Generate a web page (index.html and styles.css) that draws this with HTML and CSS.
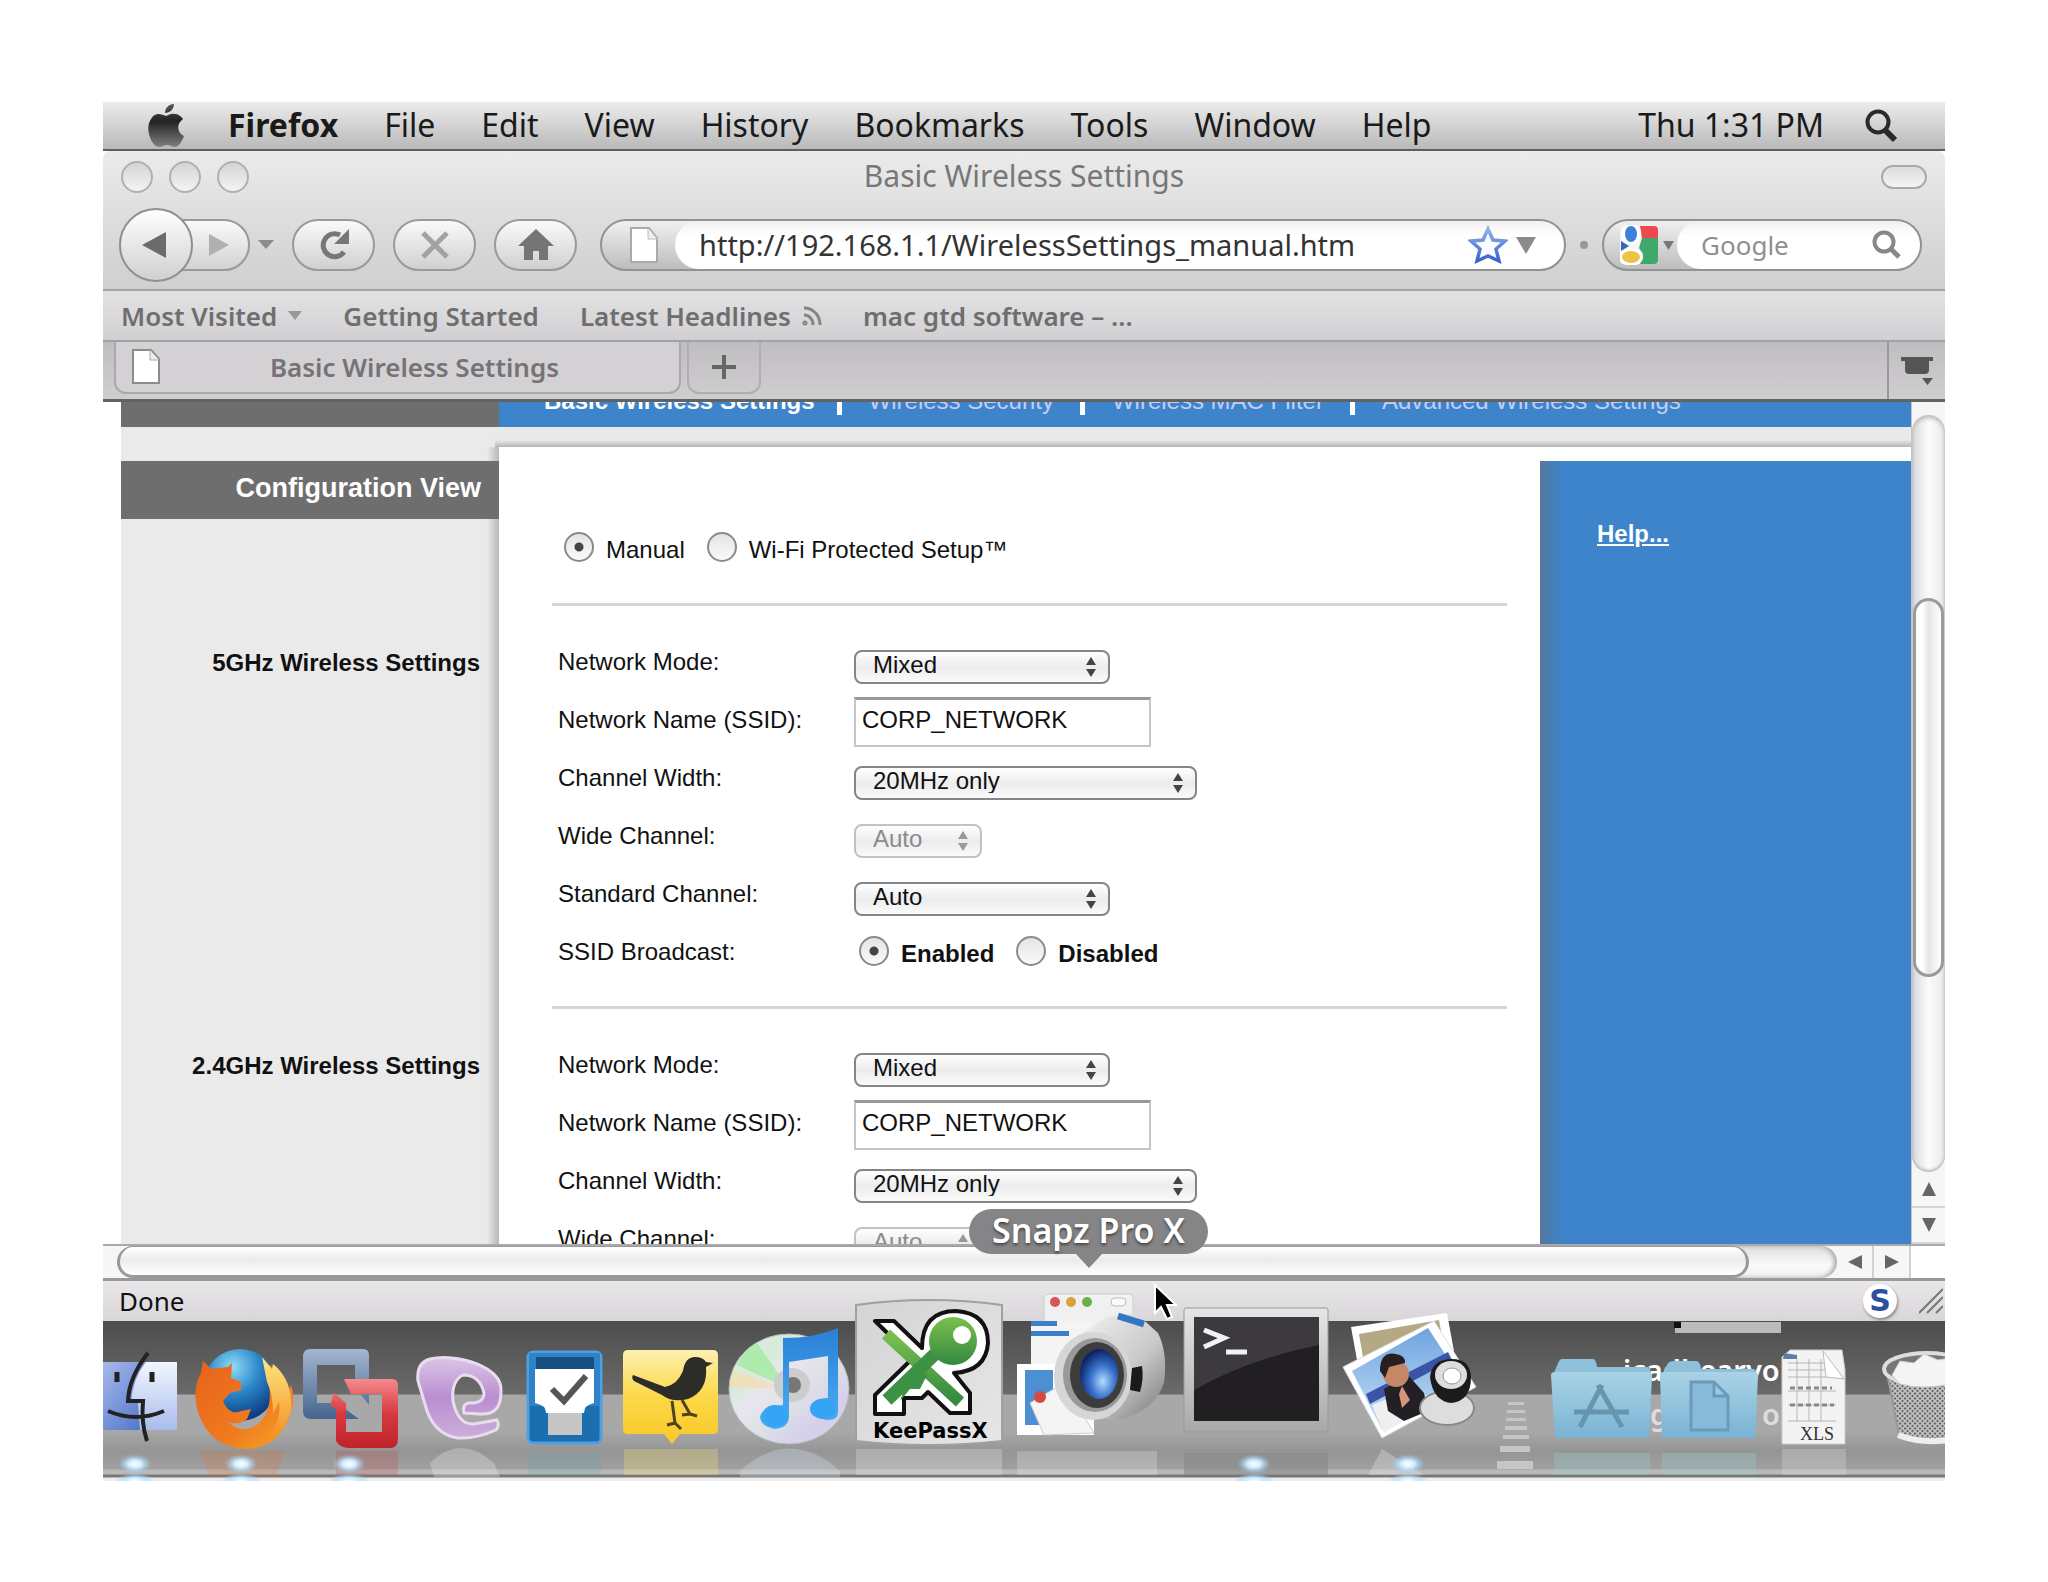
FILE: index.html
```html
<!DOCTYPE html>
<html lang="en">
<head>
<meta charset="utf-8">
<title>Basic Wireless Settings</title>
<link rel="stylesheet" href="styles.css">
</head>
<body>
<div class="desktop">

  <header class="menubar">
    <button class="menu-icon apple" aria-label="Apple menu">
      <svg width="36" height="44" viewBox="0 0 36 44"><defs><linearGradient id="ap" x1="0" y1="0" x2="0" y2="1"><stop offset="0" stop-color="#555"/><stop offset=".4" stop-color="#222"/><stop offset="1" stop-color="#808080"/></linearGradient></defs><path fill="url(#ap)" d="M18 12c3-1 5-3 9-2 3 0 6 2 8 5-7 5-6 14 1 17-2 5-5 11-9 11-3 0-5-2-8-2s-5 2-8 2C4 43-4 25 3 15c5-8 11-4 15-3zM17 9c0-5 4-9 9-9 0 5-4 9-9 9z"/></svg>
    </button>
    <nav class="menus">
      <button class="app">Firefox</button><button>File</button><button>Edit</button><button>View</button><button>History</button><button>Bookmarks</button><button>Tools</button><button>Window</button><button>Help</button>
    </nav>
    <time class="clock">Thu 1:31 PM</time>
    <button class="menu-icon spotlight" aria-label="Spotlight">
      <svg width="34" height="34" viewBox="0 0 34 34" fill="none" stroke="#2a2a2a"><circle cx="14" cy="13" r="10.500" stroke-width="4"/><path d="M21 21l10 10" stroke-width="6"/></svg>
    </button>
  </header>

  <div class="chrome">
    <div class="titlebar">
      <div class="lights"><button aria-label="Close"></button><button aria-label="Minimize"></button><button aria-label="Zoom"></button></div>
      <h1>Basic Wireless Settings</h1>
      <button class="lozenge" aria-label="Toggle toolbar"></button>
    </div>
    <div class="toolbar">
      <div class="history">
        <button class="back" aria-label="Back"><svg width="28" height="28" viewBox="0 0 28 28"><path fill="#6b6b6b" d="M24 1v26L0 14z"/></svg></button>
        <button class="forward" aria-label="Forward"><svg width="22" height="22" viewBox="0 0 22 22"><path fill="#b0b0b0" d="M1 0v22l20-11z"/></svg></button>
        <button class="drop" aria-label="Recent pages"><svg width="16" height="10" viewBox="0 0 16 10"><path fill="#8b8b8b" d="M0 0h16L8 9z"/></svg></button>
      </div>
      <button class="pill" aria-label="Reload"><svg width="34" height="34" viewBox="0 0 34 34"><path fill="none" stroke="#777" stroke-width="5" d="M23 7a11.500 11.500 0 1 0 4 17"/><path fill="#777" d="M32 1v15H17z"/></svg></button>
      <button class="pill" aria-label="Stop"><svg width="28" height="28" viewBox="0 0 28 28"><path stroke="#a2a2a2" stroke-width="5" d="M2 2l24 24M26 2L2 26"/></svg></button>
      <button class="pill" aria-label="Home"><svg width="36" height="32" viewBox="0 0 36 32"><path fill="#757575" d="M18 0L0 17h6v14h9v-9h6v9h9V17h6z"/></svg></button>
      <div class="location">
        <span class="site"><svg width="28" height="36" viewBox="0 0 28 36"><path fill="#fff" stroke="#aaa" stroke-width="2" d="M1 1h18l8 10v24H1z"/><path fill="#eee" stroke="#bbb" d="M18 1v11h9"/></svg></span>
        <div class="field">
          <input class="url" aria-label="Address" value="http://192.168.1.1/WirelessSettings_manual.htm">
          <button aria-label="Bookmark this page"><svg width="40" height="40" viewBox="0 0 40 40"><defs><linearGradient id="st" x1="0" y1="0" x2="0" y2="1"><stop offset="0" stop-color="#8fb2e6"/><stop offset="1" stop-color="#3a62cd"/></linearGradient></defs><path fill="#fafcff" stroke="url(#st)" stroke-width="3.500" d="M20 4l5 11 12 1-9 8 3 12-11-5-11 5 3-12-9-8 12-1z"/></svg></button>
          <button aria-label="Show history"><svg width="20" height="17" viewBox="0 0 20 17"><path fill="#8b8b8b" d="M0 0h20L10 17z"/></svg></button>
        </div>
      </div>
      <span class="grip"></span>
      <div class="search">
        <button class="engine" aria-label="Search engine"><svg width="58" height="40" viewBox="0 0 58 40"><rect x="0" y="1" width="38" height="38" rx="4" fill="#f4f4f4"/><path fill="#ee4a4d" d="M20 1h14q4 0 4 4v8H22z"/><path fill="#3fa96c" d="M22 13h16v22q0 4-4 4H20l3-10-4-6z"/><ellipse cx="11" cy="9" rx="10" ry="11" fill="#fff"/><ellipse cx="11" cy="9" rx="6" ry="8" fill="#3f7fdc"/><path fill="#3768b8" d="M1 16l8 5-8 5z"/><ellipse cx="11" cy="32" rx="12" ry="9" fill="#fff"/><ellipse cx="11" cy="32" rx="9" ry="6" fill="#edc345"/><path fill="#777" d="M43 16h11l-5.500 9z"/></svg></button>
        <div class="field">
          <input aria-label="Search" placeholder="Google">
          <button aria-label="Search"><svg width="30" height="30" viewBox="0 0 30 30" fill="none" stroke="#888"><circle cx="12" cy="12" r="9.500" stroke-width="4"/><path d="M19 19l8 8" stroke-width="5"/></svg></button>
        </div>
      </div>
    </div>
  </div>

  <nav class="bookmarks">
    <a href="#">Most Visited<svg width="14" height="9" viewBox="0 0 14 9"><path fill="#999" d="M0 0h14L7 9z"/></svg></a>
    <a href="#">Getting Started</a>
    <a href="#">Latest Headlines<svg width="20" height="20" viewBox="0 0 20 20" fill="none" stroke="#858585" stroke-width="3"><path d="M2 2c9 0 16 7 16 17M2 9c5 0 9 4 9 10"/><circle cx="3" cy="17" r="1"/></svg></a>
    <a href="#">mac gtd software – ...</a>
  </nav>

  <div class="tabs">
    <div class="tab"><svg width="28" height="36" viewBox="0 0 28 36"><path fill="#fff" stroke="#8c8c8c" stroke-width="2" d="M1 1h18l8 9v24H1z"/><path fill="#eee" stroke="#aaa" d="M18 1v10h9"/></svg><span>Basic Wireless Settings</span></div>
    <button class="newtab" aria-label="New tab"><svg width="24" height="24" viewBox="0 0 24 24"><path stroke="#666" stroke-width="4" d="M12 0v24M0 12h24"/></svg></button>
    <button class="alltabs" aria-label="List all tabs"><svg width="34" height="30" viewBox="0 0 34 30"><path fill="#555" d="M1 1h32v4h-4v9q0 4-4 4H9q-4 0-4-4V5H1zM22 22h11l-5.500 7z"/></svg></button>
  </div>

  <div class="view">
    <div class="page">
      <nav class="subnav">
        <div class="links"><a class="on" href="#">Basic Wireless Settings</a><a href="#">Wireless Security</a><a href="#">Wireless MAC Filter</a><a href="#">Advanced Wireless Settings</a></div>
      </nav>
      <div class="strip"></div>
      <div class="columns">
        <aside class="side">
          <h2>Configuration View</h2>
          <h3>5GHz Wireless Settings</h3>
          <h3>2.4GHz Wireless Settings</h3>
        </aside>
        <form class="form">
          <fieldset class="mode">
            <label><input type="radio" name="mode" checked>Manual</label>
            <label><input type="radio" name="mode">Wi-Fi Protected Setup™</label>
          </fieldset>
          <fieldset class="band">
            <div class="row"><label for="m5">Network Mode:</label><span class="pick medium"><select id="m5"><option>Mixed</option></select></span></div>
            <div class="row"><label for="n5">Network Name (SSID):</label><input class="ssid" id="n5" value="CORP_NETWORK"></div>
            <div class="row"><label for="w5">Channel Width:</label><span class="pick wide"><select id="w5"><option>20MHz only</option></select></span></div>
            <div class="row"><label for="c5">Wide Channel:</label><span class="pick small"><select id="c5" disabled><option>Auto</option></select></span></div>
            <div class="row"><label for="s5">Standard Channel:</label><span class="pick medium"><select id="s5"><option>Auto</option></select></span></div>
            <div class="row"><span class="name">SSID Broadcast:</span><span class="radios"><label><input type="radio" name="b5" checked>Enabled</label><label><input type="radio" name="b5">Disabled</label></span></div>
          </fieldset>
          <fieldset class="band">
            <div class="row"><label for="m2">Network Mode:</label><span class="pick medium"><select id="m2"><option>Mixed</option></select></span></div>
            <div class="row"><label for="n2">Network Name (SSID):</label><input class="ssid" id="n2" value="CORP_NETWORK"></div>
            <div class="row"><label for="w2">Channel Width:</label><span class="pick wide"><select id="w2"><option>20MHz only</option></select></span></div>
            <div class="row"><label for="c2">Wide Channel:</label><span class="pick small"><select id="c2" disabled><option>Auto</option></select></span></div>
          </fieldset>
        </form>
        <aside class="help"><a href="#">Help...</a></aside>
      </div>
    </div>
    <div class="vbar">
      <div class="track"><div class="thumb"></div></div>
      <button aria-label="Scroll up"><svg width="14" height="14" viewBox="0 0 14 14"><path fill="#666" d="M7 0l7 14H0z"/></svg></button>
      <button aria-label="Scroll down"><svg width="14" height="14" viewBox="0 0 14 14"><path fill="#666" d="M0 0h14L7 14z"/></svg></button>
    </div>
  </div>

  <div class="hbar">
    <div class="track"><div class="thumb"></div></div>
    <button aria-label="Scroll left"><svg width="14" height="14" viewBox="0 0 14 14"><path fill="#666" d="M14 0v14L0 7z"/></svg></button>
    <button aria-label="Scroll right"><svg width="14" height="14" viewBox="0 0 14 14"><path fill="#666" d="M0 0v14l14-7z"/></svg></button>
    <span class="corner"></span>
  </div>

  <footer class="status">
    <span>Done</span>
    <span class="badge">S</span>
    <svg width="24" height="26" viewBox="0 0 24 26" stroke="#777" stroke-width="2"><path d="M0 25L24 1M8 25l16-16M17 25l7-7"/></svg>
  </footer>

  <div class="dock">
    <svg width="0" height="0" class="defs"><defs>
      <linearGradient id="fa" x1="0" y1="0" x2="1" y2="1"><stop offset="0" stop-color="#aebfee"/><stop offset="1" stop-color="#4b70c8"/></linearGradient>
      <linearGradient id="fb" x1="0" y1="0" x2="0" y2="1"><stop offset="0" stop-color="#f2f6ff"/><stop offset="1" stop-color="#a9bdec"/></linearGradient>
      <radialGradient id="gl" cx=".4" cy=".25" r=".75"><stop offset="0" stop-color="#8fdcf5"/><stop offset=".5" stop-color="#2a86c8"/><stop offset="1" stop-color="#0b3b80"/></radialGradient>
      <linearGradient id="fx" x1="0" y1="0" x2="1" y2="1"><stop offset="0" stop-color="#e8621c"/><stop offset=".6" stop-color="#f07a1e"/><stop offset="1" stop-color="#f5a92a"/></linearGradient>
      <linearGradient id="fy" x1="0" y1="0" x2="0" y2="1"><stop offset="0" stop-color="#ffe680"/><stop offset="1" stop-color="#f08a1e"/></linearGradient>
      <linearGradient id="vb" x1="0" y1="0" x2="0" y2="1"><stop offset="0" stop-color="#a4b6d0"/><stop offset="1" stop-color="#45658f"/></linearGradient>
      <linearGradient id="vr" x1="0" y1="0" x2="0" y2="1"><stop offset="0" stop-color="#f58a8c"/><stop offset=".5" stop-color="#d63a40"/><stop offset="1" stop-color="#c02228"/></linearGradient>
      <linearGradient id="en" x1="0" y1="0" x2="0" y2="1"><stop offset="0" stop-color="#dcc4e6"/><stop offset=".5" stop-color="#b98fd0"/><stop offset="1" stop-color="#cbaedb"/></linearGradient>
      <linearGradient id="yl" x1="0" y1="0" x2="0" y2="1"><stop offset="0" stop-color="#fdf0b0"/><stop offset=".5" stop-color="#fcd848"/><stop offset="1" stop-color="#f8c828"/></linearGradient>
      <linearGradient id="cd" x1="0" y1="0" x2="1" y2="1"><stop offset="0" stop-color="#eee"/><stop offset=".25" stop-color="#d4ecd8"/><stop offset=".4" stop-color="#e9e6ee"/><stop offset=".6" stop-color="#dcdfe6"/><stop offset=".8" stop-color="#d4ceec"/><stop offset="1" stop-color="#c4eee0"/></linearGradient>
      <linearGradient id="nt" x1="0" y1="0" x2="0" y2="1"><stop offset="0" stop-color="#2b7fd6"/><stop offset="1" stop-color="#48b0f4"/></linearGradient>
      <linearGradient id="kp" x1="0" y1="0" x2="1" y2="1"><stop offset="0" stop-color="#d4d4d4"/><stop offset="1" stop-color="#e6e6e6"/></linearGradient>
      <linearGradient id="kg" x1="0" y1="0" x2="0" y2="1"><stop offset="0" stop-color="#7bc04f"/><stop offset="1" stop-color="#33893f"/></linearGradient>
      <linearGradient id="cm" x1="0" y1="0" x2="1" y2="1"><stop offset="0" stop-color="#fafafa"/><stop offset=".6" stop-color="#c8c8c8"/><stop offset="1" stop-color="#777"/></linearGradient>
      <radialGradient id="ln" cx=".6" cy=".65" r=".65"><stop offset="0" stop-color="#b5dcff"/><stop offset=".5" stop-color="#3872cc"/><stop offset="1" stop-color="#0c2063"/></radialGradient>
      <linearGradient id="tm" x1="0" y1="0" x2="0" y2="1"><stop offset="0" stop-color="#e6e6e6"/><stop offset="1" stop-color="#a8a8a8"/></linearGradient>
      <linearGradient id="fd" x1="0" y1="0" x2="0" y2="1"><stop offset="0" stop-color="#a9d3e6"/><stop offset="1" stop-color="#79b3d4"/></linearGradient>
      <linearGradient id="sky" x1="0" y1="0" x2="0" y2="1"><stop offset="0" stop-color="#6fa4e0"/><stop offset="1" stop-color="#c8e0f6"/></linearGradient>
      <radialGradient id="on"><stop offset="0" stop-color="#fff"/><stop offset=".4" stop-color="#d0ecff"/><stop offset="1" stop-color="#8cc4f0" stop-opacity="0"/></radialGradient>
      <pattern id="mesh" width="5" height="5" patternUnits="userSpaceOnUse"><rect width="5" height="5" fill="#666"/><path stroke="#c4c4c4" stroke-width="1.500" d="M0 0l5 5M5 0L0 5"/></pattern>
    </defs></svg>

    <button aria-label="Finder"><svg width="82" height="190" viewBox="103 1290 82 190"><path fill="url(#fa)" d="M95 1361h55l-8 38v30H95z"/><path fill="url(#fb)" d="M146 1361h31v68h-37l-2-28h-7q2-24 15-40z"/><path fill="none" stroke="#222" stroke-width="4" d="M148 1352q-19 24-20 48h15q-2 22 4 40M108 1410q28 12 56 0"/><path stroke="#222" stroke-width="5" d="M117 1371v10M152 1371v10"/><ellipse cx="135" cy="1463" rx="17" ry="10" fill="url(#on)"/><ellipse cx="135" cy="1480" rx="20" ry="8" fill="url(#on)"/></svg></button>

    <button aria-label="Firefox"><svg width="112" height="190" viewBox="185 1290 112 190"><circle cx="240" cy="1384" r="36" fill="url(#gl)"/><path fill="url(#fx)" d="M203 1360l8 8 17-2 4-4-1 15 10 4v8l-11 3-7 8q6 15 18 10l10-2-4 10q-12 8-20 2 14 14 30 4 16-14 12-40l-4-22q16 6 24 26l2-4q6 16-4 38-14 26-42 26-34-2-46-34-8-24 2-42z"/><path fill="url(#fy)" d="M262 1356l10 12 1-5q20 16 18 46-6 26-30 34 22-20 18-42l-6 12q0-20-6-32z"/><path fill="#f07020" opacity=".2" d="M200 1450h85l-8 25h-68z"/><ellipse cx="241" cy="1463" rx="17" ry="10" fill="url(#on)"/><ellipse cx="241" cy="1480" rx="20" ry="8" fill="url(#on)"/></svg></button>

    <button aria-label="VMware Fusion"><svg width="110" height="190" viewBox="297 1290 110 190"><path fill="url(#vb)" fill-rule="evenodd" d="M310 1348h53q6 0 6 6v50l-14-18v-22h-38v38h20l22 16h-48q-8 0-8-8v-54q0-8 7-8z"/><path fill="url(#vr)" fill-rule="evenodd" d="M344 1378h48q6 0 6 6v54q0 9-8 9h-41q-9 0-13-7v-32l-6-4 4-12 12 10v29h36v-38h-31z"/><path fill="#c33" opacity=".2" d="M336 1450h62v24h-62z"/><ellipse cx="349" cy="1463" rx="17" ry="10" fill="url(#on)"/><ellipse cx="349" cy="1480" rx="20" ry="8" fill="url(#on)"/></svg></button>

    <button aria-label="Entourage"><svg width="108" height="190" viewBox="407 1290 108 190"><path fill="url(#en)" stroke="#e9dcef" stroke-width="3" d="M430 1358C455 1352 503 1365 501 1390C501 1405 496 1414 480 1413L464 1412Q462 1404 468 1402Q484 1403 484 1392Q480 1374 463 1374Q451 1380 453 1400Q458 1424 474 1423L497 1419Q500 1424 496 1429Q476 1438 458 1437Q436 1434 427 1410L418 1380Q416 1362 430 1358z"/><path fill="#eee" opacity=".3" d="M430 1462q30-30 64 0l6 14h-66z"/></svg></button>

    <button aria-label="Things"><svg width="97" height="190" viewBox="515 1290 97 190"><rect x="528" y="1351" width="73" height="91" rx="5" fill="#1b6fae" stroke="#4ea0e0" stroke-width="3"/><path fill="#2f82c8" d="M529 1352h71v53h-71z"/><path fill="#174f83" d="M536 1356h58v12h-58z"/><path fill="#fff" d="M535 1368h59v34q-10 2-10 10h-38q0-8-11-10z"/><path fill="#c6c6c6" d="M548 1412h34v22h-34z"/><path fill="none" stroke="#555" stroke-width="6" d="M552 1388l12 12 22-25"/><path fill="#5ab" opacity=".2" d="M528 1452h73v22h-73z"/></svg></button>

    <button aria-label="Twitterrific"><svg width="111" height="190" viewBox="612 1290 111 190"><path fill="url(#yl)" d="M628 1349h85q5 0 5 5v74q0 5-5 5h-33l-8 10-8-10h-36q-5 0-5-5v-74q0-5 5-5z"/><path fill="#2c2c28" d="M633 1374l32 12q12-2 18-16 2-14 12-14 8 0 11 5l7 1-7 4q2 24-18 32-16 4-26-4l-28-14q-3-3-1-6z"/><path fill="none" stroke="#4d421e" stroke-width="3" d="M672 1400l3 22-8 2m8-2l6 6m1-29l8 14-8 1m8-1l7 2"/><path fill="#f4e070" opacity=".3" d="M624 1448h94v26h-94z"/></svg></button>

    <button aria-label="iTunes"><svg width="129" height="190" viewBox="723 1290 129 190"><ellipse cx="789" cy="1388" rx="60" ry="55" fill="url(#cd)" stroke="#bbb"/><path fill="#9bea98" opacity=".7" d="M789 1388l-52-24q8-18 20-22z"/><path fill="#f6dcae" opacity=".7" d="M789 1388l-56-18-3 16z"/><ellipse cx="792" cy="1384" rx="18" ry="17" fill="#ccc"/><circle cx="793" cy="1384" r="8" fill="#777"/><path fill="url(#nt)" d="M783 1337q32 0 55-10v84q0 8-10 8-16-2-18-12 2-10 18-10v-42l-39 6v54q0 12-14 13-14-2-15-12 2-10 23-12z"/><ellipse cx="775" cy="1415" rx="13" ry="11" fill="#35a4f4"/><ellipse cx="823" cy="1408" rx="13" ry="10" fill="#35a4f4"/><path fill="#d8e8f4" opacity=".3" d="M740 1470q50-45 100 0v6H740z"/></svg></button>

    <button aria-label="KeePassX"><svg width="156" height="190" viewBox="852 1290 156 190"><path fill="url(#kp)" stroke="#a0a0a0" stroke-width="2" d="M856 1304q73-10 146 0v136q-73 8-146 0z"/><path fill="#fff" stroke="#111" stroke-width="4" stroke-linejoin="round" d="M875 1320h19l28 27q0-37 34-37 32 2 32 32-2 28-34 30l16 20v20h-20l-22-21-6 6h-18v16h-29v-19l38-37-38-37z"/><path stroke="url(#kg)" stroke-width="12" d="M886 1333l74 68"/><path fill="none" stroke="#3b9144" stroke-width="13" d="M887 1399l48-46"/><path fill="#3b9144" d="M900 1400l10-12h10l8-16-20 6z"/><circle cx="953" cy="1340" r="24" fill="url(#kg)"/><circle cx="962" cy="1334" r="9" fill="#fff"/><text x="873" y="1437" class="kp-name">KeePassX</text><path fill="#ddd" opacity=".35" d="M856 1448h146v26H856z"/></svg></button>

    <button aria-label="Snapz Pro X"><svg width="164" height="190" viewBox="1008 1290 164 190"><path fill="#fff" d="M1017 1363h30v71h-30z"/><rect x="1044" y="1293" width="89" height="50" rx="4" fill="#f0f0f0" stroke="#ccc"/><circle cx="1055" cy="1301" r="5" fill="#d6565a"/><circle cx="1071" cy="1301" r="5" fill="#dba13c"/><circle cx="1087" cy="1301" r="5" fill="#69b04c"/><rect x="1111" y="1297" width="15" height="8" rx="4" fill="#fafafa" stroke="#bbb"/><path fill="#f4f4f4" d="M1031 1320h60v61h-60z"/><path fill="#3b7fcb" d="M1031 1320h26v5h-26zM1031 1330h38v5h-38z"/><path fill="#fff" d="M1017 1363h77v71h-77z"/><path fill="#4c8fd2" d="M1025 1369h28v55h-28z"/><path fill="#f4f4f4" stroke="#ccc" d="M1030 1402l34-20 30 50-50 2z"/><circle cx="1040" cy="1396" r="6" fill="#d24b3c"/><path fill="url(#cm)" d="M1086 1330l20-14 30-4 22 20q10 20 6 50-10 30-50 38-40-8-55-50 4-30 27-40z"/><path stroke="#3576c4" stroke-width="7" d="M1118 1315l26 8"/><ellipse cx="1093" cy="1375" rx="39" ry="44" fill="#d6d6d6"/><ellipse cx="1095" cy="1374" rx="32" ry="37" fill="#999"/><ellipse cx="1097" cy="1374" rx="27" ry="33" fill="#3c3c3c"/><ellipse cx="1099" cy="1373" rx="19" ry="25" fill="url(#ln)"/><path fill="#1a1a1a" d="M1132 1367l10-2q2 12-2 26l-10-2z"/><path fill="#eee" opacity=".25" d="M1017 1450h140v24h-140z"/></svg></button>

    <button aria-label="Terminal"><svg width="164" height="190" viewBox="1172 1290 164 190"><rect x="1184" y="1307" width="144" height="124" rx="2" fill="url(#tm)" stroke="#999"/><rect x="1194" y="1316" width="125" height="104" fill="#211f21"/><path fill="#3c3a3e" d="M1194 1316h125v28q-70 14-125 45z"/><path fill="none" stroke="#f2f2f2" stroke-width="5" d="M1204 1329l20 8-20 9M1226 1351h21"/><path fill="#888" opacity=".6" d="M1184 1452h144v22h-144z"/><ellipse cx="1254" cy="1463" rx="17" ry="10" fill="url(#on)"/><ellipse cx="1254" cy="1480" rx="20" ry="8" fill="url(#on)"/></svg></button>

    <button aria-label="Preview"><svg width="148" height="190" viewBox="1336 1290 148 190"><path fill="#fff" d="M1351 1326l96-14 12 66-96 14z"/><path fill="#b5a884" d="M1359 1333l80-14 10 58-80 14z"/><path fill="#fff" stroke="#ddd" d="M1343 1366l91-46 42 66-94 51z"/><path fill="url(#sky)" d="M1352 1370l76-43 30 46-76 56z"/><path fill="#3a55a8" d="M1366 1393l82-42 4 8-82 44z"/><path fill="#f1eef0" d="M1372 1404l30-12 40 4-58 36z"/><path fill="#222024" d="M1384 1388l24-14 16 18 4 18-24 10-16-10z"/><circle cx="1396" cy="1373" r="13" fill="#c58766"/><path fill="#26201f" d="M1380 1370q0-20 16-17 10 2 9 9l-16 4-4 11z"/><path fill="#d69478" d="M1402 1385l8 14-8 8-3-14z"/><ellipse cx="1447" cy="1407" rx="27" ry="17" fill="#ddd" stroke="#888" stroke-width="2"/><path fill="#1b1b1b" d="M1430 1376q2-18 22-18 18 0 19 18 0 24-20 26-18-2-21-26z"/><ellipse cx="1451" cy="1374" rx="16" ry="14" fill="#ddd"/><ellipse cx="1452" cy="1375" rx="9" ry="8" fill="#fff" stroke="#999"/><path fill="#eee" opacity=".3" d="M1368 1474l14-26 22 14 20 12z"/><ellipse cx="1408" cy="1463" rx="17" ry="10" fill="url(#on)"/><ellipse cx="1408" cy="1480" rx="20" ry="8" fill="url(#on)"/></svg></button>

    <svg width="61" height="190" viewBox="1484 1290 61 190" fill="#c6c6c6"><path d="M1508 1401h16v3h-16zM1507 1409h18v3h-18zM1506 1417h20v3h-20zM1505 1425h22v4h-22zM1503 1434h26v4h-26zM1500 1445h30v6h-30zM1497 1460h36v8h-36z"/></svg>

    <button aria-label="Applications"><svg width="111" height="190" viewBox="1545 1290 111 190"><path fill="#bbb" d="M1675 1321h106v11h-106z"/><path fill="#111" d="M1674 1321h7v6h-7z"/><text x="1623" y="1380" class="disk">jcadhearyo</text><text x="1650" y="1424" class="disk faint">g</text><text x="1762" y="1424" class="disk faint">o</text><path fill="#8fc0da" d="M1553 1374l6-14q2-3 6-2h28q3 0 4 8h50q4 0 4 8z"/><path fill="url(#fd)" d="M1551 1374q0-3 4-3h93q4 0 4 4l-3 62h-94z"/><path fill="none" stroke="#6795b0" stroke-width="5" d="M1580 1426l22-42M1598 1384l24 42M1574 1411h55"/><path fill="#9cc" opacity=".3" d="M1554 1452h96v22h-96z"/></svg></button>

    <button aria-label="Documents"><svg width="114" height="190" viewBox="1656 1290 114 190"><path fill="#8fc0da" d="M1662 1374l6-12q2-2 6-2h22q4 0 5 8h52q4 0 4 8z"/><path fill="url(#fd)" d="M1660 1374q0-3 4-3h90q4 0 4 4l-3 62h-93z"/><path fill="#86bad8" stroke="#6a9cba" stroke-width="3" d="M1691 1381h23l14 14v34h-37zM1714 1381v14h14"/><path fill="#9cc" opacity=".3" d="M1662 1452h94v22h-94z"/></svg></button>

    <button aria-label="Spreadsheet"><svg width="90" height="190" viewBox="1770 1290 90 190"><path fill="#f3f3f3" stroke="#ccc" d="M1782 1356l8-7h52l3 20v74h-63z"/><path stroke="#b5b5b5" d="M1788 1362h38M1788 1369h40M1788 1376h48M1788 1390h48M1788 1404h48M1788 1420h48M1797 1358v62M1809 1358v62M1821 1358v62"/><path stroke="#888" stroke-width="3" stroke-dasharray="5 3" d="M1790 1387h42M1790 1404h44"/><path fill="#fff" stroke="#bbb" d="M1823 1350l21 28-18-2z"/><path fill="#5b7fa8" d="M1784 1352l13 2v4h-14z"/><text x="1800" y="1439" class="xls">XLS</text><path fill="#ddd" opacity=".3" d="M1782 1448h64v26h-64z"/></svg></button>

    <button aria-label="Trash"><svg width="85" height="190" viewBox="1860 1290 85 190"><path fill="url(#mesh)" stroke="#999" stroke-width="2" d="M1887 1372l12 62q24 14 60 6v-72z"/><ellipse cx="1927" cy="1368" rx="43" ry="16" fill="#777" stroke="#ddd" stroke-width="4"/><path fill="#f4f4f4" stroke="#ccc" d="M1892 1374l8-14 14 2 10-9 14 6 12-2v26q-28 6-50 0z"/><path fill="none" stroke="#eee" stroke-width="6" d="M1898 1434q26 10 56 4"/></svg></button>

    <span class="tip">Snapz Pro X</span>
    <svg class="cursor" width="26" height="38" viewBox="0 0 26 38"><path fill="#000" stroke="#fff" stroke-width="2" d="M2 2v28l6-6 6 12 5-2-5-12h9z"/></svg>
  </div>
</div>
</body>
</html>
```
FILE: styles.css
```css
* { box-sizing: border-box; }
html, body { margin: 0; background: #fff; }
body { min-height: 100vh; padding: 102px 103px 101px; font-family: "Noto Sans", "Open Sans", sans-serif; }
button { margin: 0; padding: 0; border: 0; background: none; font: inherit; color: inherit; }
svg { display: block; flex: none; }
a { color: inherit; text-decoration: none; }

.desktop { display: flex; flex-direction: column; height: calc(100vh - 203px); min-height: 900px; overflow: hidden; }

/* system menu bar */
.menubar { display: flex; align-items: center; flex: none; height: 49px; padding: 0 47px 0 45px; border-bottom: 2px solid #5e5e5e; background: linear-gradient(#ececec, #b9b9b9); font-size: 32px; line-height: 40px; color: #1a1a1a; }
.menus, .clock { padding-bottom: 2px; }
.menus { display: flex; gap: 46px; margin-left: 44px; }
.app { font-weight: 700; }
.clock { margin-left: auto; margin-right: 40px; }

/* window title and navigation toolbar */
.chrome { flex: none; height: 140px; border-bottom: 2px solid #a3a2a4; border-radius: 8px 8px 0 0; background: linear-gradient(#ebebeb, #cfcfcf); }
.titlebar { display: flex; align-items: center; justify-content: space-between; height: 52px; padding: 0 18px; }
.titlebar h1 { margin: 0; padding-bottom: 2px; font-size: 30px; font-weight: 400; line-height: 40px; color: #777; }
.lights { display: flex; gap: 16px; width: 128px; }
.lights button { width: 32px; height: 32px; border: 2px solid #b0b0b0; border-radius: 50%; background: linear-gradient(#d4d4d4, #f4f4f4); }
.lozenge { width: 46px; height: 24px; margin-left: 82px; border: 2px solid #aaa; border-radius: 12px; background: linear-gradient(#dcdcdc, #f4f4f4); }
.toolbar { display: flex; align-items: center; gap: 18px; height: 84px; padding: 0 23px 0 16px; }
.toolbar button { display: flex; align-items: center; justify-content: center; }
.history { display: flex; align-items: center; }
.back { position: relative; width: 74px; height: 74px; border: 2px solid #8f8f8f; border-radius: 50%; background: linear-gradient(#fff, #d0d0d0); }
.forward { width: 68px; height: 52px; margin-left: -11px; padding-left: 6px; border: 2px solid #999; border-radius: 0 26px 26px 0; background: linear-gradient(#fafafa, #d2d2d2); }
.drop { width: 16px; margin: 0 0 0 8px; }
.pill { width: 83px; height: 52px; border: 2px solid #999; border-radius: 26px; background: linear-gradient(#fafafa, #d0d0d0); }
.location, .search { display: flex; height: 52px; border: 2px solid #929292; border-radius: 26px; background: linear-gradient(#f0f0f0, #bdbdbd); overflow: hidden; }
.location { flex: 1; margin-left: 5px; }
.site { display: flex; align-items: center; justify-content: center; width: 73px; padding-left: 10px; }
.field { display: flex; flex: 1; min-width: 0; align-items: center; border-radius: 24px; background: linear-gradient(#f0f0f0, #fff 30%); }
.field input { flex: 1; min-width: 0; height: 48px; padding: 0 0 0 24px; border: 0; outline: 0; background: none; font: 26px/48px "Noto Sans", "Open Sans", sans-serif; color: #333; }
.field .url { font-size: 29px; }
.field input::placeholder { color: #909090; opacity: 1; }
.location .field { gap: 8px; padding-right: 28px; }
.grip { width: 8px; height: 8px; margin: 0 -4px; border-radius: 50%; background: #999; }
.search { width: 320px; }
.engine { flex: none; width: 73px; padding-left: 16px; }
.search .field { padding-right: 18px; }

.bookmarks { display: flex; flex: none; gap: 41px; height: 51px; padding-left: 18px; border-bottom: 2px solid #a2a1a3; background: linear-gradient(#e3e2e3, #d1cfd2); font-size: 26px; font-weight: 600; line-height: 50px; color: #6e6e6e; white-space: nowrap; }
.bookmarks a { display: flex; align-items: center; gap: 11px; }

.tabs { display: flex; flex: none; height: 60px; padding-left: 11px; border-bottom: 3px solid #626262; background: linear-gradient(#bfbdc0, #d0ced1); }
.tab { display: flex; align-items: center; width: 567px; height: 52px; padding-left: 16px; border: 2px solid #aaa8ab; border-top: 0; border-radius: 0 0 12px 12px; background: #d3d1d4; font-size: 26px; font-weight: 600; color: #757375; }
.tab span { flex: 1; padding-right: 10px; text-align: center; }
.newtab { display: flex; align-items: center; justify-content: center; width: 74px; height: 52px; margin-left: 6px; border: 2px solid #b0aeb1; border-top: 0; border-radius: 0 0 12px 12px; }
.alltabs { display: flex; align-items: center; justify-content: center; width: 58px; margin-left: auto; border-left: 2px solid #9a989b; }

/* page viewport, scrolled part way down */
.view { display: flex; flex: 1; min-height: 0; overflow: hidden; }
.page { flex: 1; min-width: 0; overflow: hidden; padding-left: 18px; background: #fff; font-family: "Liberation Sans", Arial, sans-serif; font-size: 24px; color: #111; }
.subnav { height: 25px; overflow: hidden; padding-left: 378px; background: linear-gradient(90deg, #6e6e6e 378px, #3d84ca 378px); }
.links { display: flex; height: 25px; align-items: flex-end; padding: 0 0 12px 20px; line-height: 28px; color: #c5cdf6; white-space: nowrap; }
.links a { height: 28px; padding: 0 26px 0 25px; }
.links a + a { padding-left: 27px; border-left: 5px solid #fff; }
.links .on { padding-right: 22px; font-weight: 700; color: #fff; }
.strip { height: 20px; background: linear-gradient(90deg, #ebeaeb 374px, transparent 374px), linear-gradient(#e8eae9 65%, #b4b6b5); }
.columns { display: grid; grid-template-columns: 378px 1fr 371px; }
.side { padding-top: 14px; background: linear-gradient(90deg, #ebeaeb 366px, #b8b7b9); text-align: right; }
.side h2 { margin: 0 0 87px; height: 58px; padding-right: 18px; background: #6e6e6e; font-size: 27px; line-height: 55px; color: #fff; }
.side h3 { margin: 0; height: 403px; padding: 41px 19px 0 0; font-size: 24px; line-height: 32px; }
.form { padding: 0 33px 0 53px; }
fieldset { min-width: 0; margin: 0; padding: 0; border: 0; border-bottom: 3px solid #d6d4d7; }
.mode { display: flex; align-items: flex-start; gap: 22px; height: 159px; padding: 85px 0 0 12px; line-height: 36px; }
.mode label, .radios label { display: flex; align-items: center; gap: 12px; }
input[type="radio"] { appearance: none; flex: none; width: 30px; height: 30px; margin: 0; border: 2px solid #8a8a8a; border-radius: 50%; background: linear-gradient(#e4e4e4, #fafafa); }
input[type="radio"]:checked { background: radial-gradient(circle, #444 4px, transparent 5px), linear-gradient(#e4e4e4, #fafafa); }
.mode input, .radios input { margin-bottom: 6px; }
.band { padding: 27px 0 25px; }
.row { display: grid; grid-template-columns: 302px 1fr; align-items: start; height: 58px; }
.row > label, .name { padding-left: 6px; line-height: 58px; }
.pick { position: relative; display: block; height: 34px; margin-top: 17px; }
.medium { width: 256px; }
.wide { width: 343px; }
.small { width: 128px; }
.pick select { appearance: none; width: 100%; height: 34px; padding: 0 0 5px 17px; border: 2px solid #858587; border-radius: 8px; background: linear-gradient(#fff, #ececee 50%, #fafafa); font: 24px/25px "Liberation Sans", Arial, sans-serif; color: #111; }
.pick select:disabled { border-color: #c2c2c4; color: #8a8a8a; opacity: 1; }
.pick::before, .pick::after { content: ""; position: absolute; right: 14px; border: 5px solid transparent; }
.pick::before { top: 2px; border-bottom: 8px solid #444; }
.pick::after { bottom: 2px; border-top: 8px solid #444; }
.pick:has(:disabled)::before { border-bottom-color: #999; }
.pick:has(:disabled)::after { border-top-color: #999; }
.ssid { width: 297px; height: 50px; margin-top: 6px; padding: 0 0 5px 6px; border: 2px solid #c6c5c7; border-top: 3px solid #99979a; background: #fff; font: 24px/40px "Liberation Sans", Arial, sans-serif; color: #111; }
.radios { display: flex; gap: 22px; padding: 2px 0 0 5px; font-weight: 700; line-height: 58px; }
.help { padding: 57px 0 0 57px; margin-top: 14px; background: linear-gradient(90deg, #54789c, #3d84ca 22px); }
.help a { font-weight: 700; line-height: 32px; color: #fff; text-decoration: underline; }

/* scroll bars */
.vbar { display: flex; flex: none; flex-direction: column; width: 34px; border-left: 1px solid #c4c4c8; background: #f7f6f7; }
.vbar .track { flex: 1; margin-top: 13px; padding: 183px 1px 0; border-radius: 17px; background: linear-gradient(90deg, #d9d9dc, #fbfbfb 50%, #eaeaea); box-shadow: inset 0 3px 4px #bbb, inset 0 -2px 3px #bbb; }
.vbar .thumb { height: 379px; border: 3px solid #9a9a9c; border-radius: 16px; background: linear-gradient(90deg, #fff 25%, #e4e5e5 50%, #fff); }
.vbar button { display: flex; align-items: center; justify-content: center; height: 36px; border-bottom: 2px solid #d5d5d5; }
.hbar { display: flex; flex: none; height: 37px; border-top: 2px solid #aaa; border-bottom: 3px solid #999; background: #f7f6f7; }
.hbar .track { flex: 1; margin-left: 14px; padding-right: 88px; border-radius: 16px; background: linear-gradient(#dedee0, #fafafa 60%, #eee); box-shadow: inset -3px 0 4px #aaa; }
.hbar .thumb { height: 32px; border: 3px solid #99999b; border-width: 1px 3px 3px; border-radius: 16px; background: linear-gradient(#fff, #ebebec 45%, #fff); }
.hbar button { display: flex; align-items: center; justify-content: center; width: 37px; border-right: 2px solid #d2d2d2; }
.corner { width: 34px; background: #fff; }

.status { display: flex; flex: none; align-items: center; height: 40px; padding: 0 2px 0 16px; background: linear-gradient(#e9e7e9, #d8d6d9); font-size: 26px; line-height: 40px; color: #111; }
.badge { width: 34px; height: 34px; margin: 0 22px 0 auto; border-radius: 50%; background: #fff; box-shadow: 1px 2px 3px #888; font: 700 30px/34px "DejaVu Sans", sans-serif; text-align: center; color: #2c4f9e; }

/* dock; its icons rise above the shelf, over the status bar */
.dock { position: relative; z-index: 1; display: flex; flex: none; justify-content: space-between; height: 190px; margin-top: -30px; background: linear-gradient(transparent 30px, #4e4d4e 30px, #6b6a6b 103px, #a9a8a9 104px, #a9a8a9 140px, #969596 160px, #a0a0a0 178px, #b8b8b8 179px, #bababa 183px, #777 184px, #777 186px, #ededed 187px); }
.dock svg { overflow: visible; }
.dock button:first-child svg { overflow: hidden; }
.defs { position: absolute; }
.kp-name { font: 700 21px "DejaVu Sans", sans-serif; }
.disk { font: 600 29px "Noto Sans", sans-serif; fill: #fff; }
.faint { fill: #ddd; }
.xls { font: 18px "Liberation Serif", serif; fill: #333; }
.tip { position: absolute; left: 866px; top: -82px; height: 45px; padding: 0 23px; border-radius: 23px; background: #858486; font-size: 34px; font-weight: 600; line-height: 42px; color: #fff; text-shadow: 0 2px 3px #444; white-space: nowrap; }
.tip::after { content: ""; position: absolute; left: 50%; top: 100%; margin-left: -13px; border: 13px solid transparent; border-top: 14px solid #858486; }
.cursor { position: absolute; left: 1050px; top: -8px; }
```
